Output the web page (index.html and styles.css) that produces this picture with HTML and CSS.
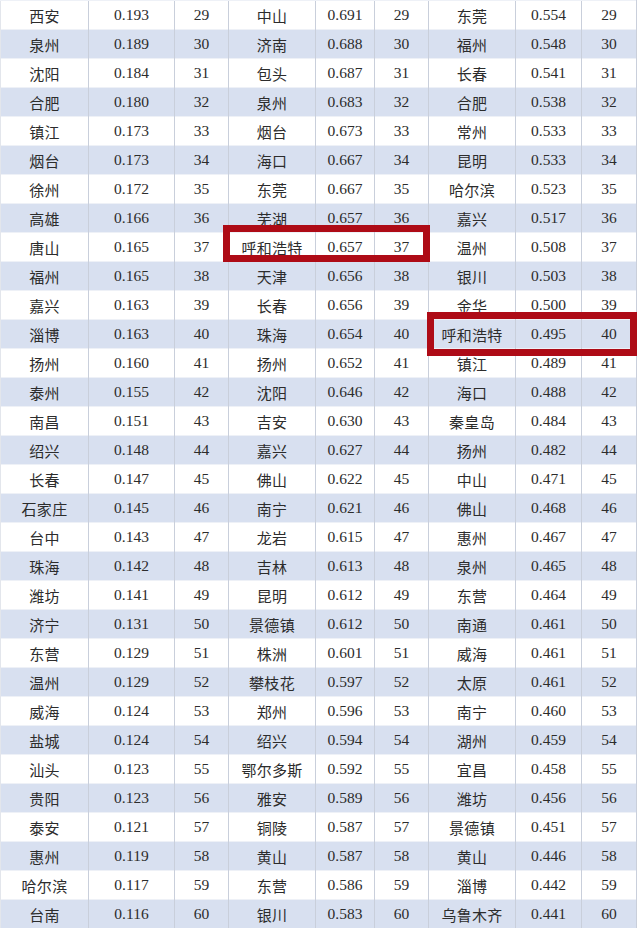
FILE: index.html
```html
<!DOCTYPE html>
<html lang="zh">
<head>
<meta charset="utf-8">
<title>城市排名</title>
<link rel="stylesheet" href="styles.css">
</head>
<body>
<div class="sheet">
<table class="rank">
<colgroup>
<col class="w88"><col class="w86"><col class="w54"><col class="w87"><col class="w59"><col class="w54"><col class="w87"><col class="w66"><col class="w55">
</colgroup>
<tbody>
<tr><td class="c">西安</td><td class="n">0.193</td><td class="n">29</td><td class="c">中山</td><td class="n">0.691</td><td class="n">29</td><td class="c">东莞</td><td class="n">0.554</td><td class="n">29</td></tr>
<tr><td class="c">泉州</td><td class="n">0.189</td><td class="n">30</td><td class="c">济南</td><td class="n">0.688</td><td class="n">30</td><td class="c">福州</td><td class="n">0.548</td><td class="n">30</td></tr>
<tr><td class="c">沈阳</td><td class="n">0.184</td><td class="n">31</td><td class="c">包头</td><td class="n">0.687</td><td class="n">31</td><td class="c">长春</td><td class="n">0.541</td><td class="n">31</td></tr>
<tr><td class="c">合肥</td><td class="n">0.180</td><td class="n">32</td><td class="c">泉州</td><td class="n">0.683</td><td class="n">32</td><td class="c">合肥</td><td class="n">0.538</td><td class="n">32</td></tr>
<tr><td class="c">镇江</td><td class="n">0.173</td><td class="n">33</td><td class="c">烟台</td><td class="n">0.673</td><td class="n">33</td><td class="c">常州</td><td class="n">0.533</td><td class="n">33</td></tr>
<tr><td class="c">烟台</td><td class="n">0.173</td><td class="n">34</td><td class="c">海口</td><td class="n">0.667</td><td class="n">34</td><td class="c">昆明</td><td class="n">0.533</td><td class="n">34</td></tr>
<tr><td class="c">徐州</td><td class="n">0.172</td><td class="n">35</td><td class="c">东莞</td><td class="n">0.667</td><td class="n">35</td><td class="c">哈尔滨</td><td class="n">0.523</td><td class="n">35</td></tr>
<tr><td class="c">高雄</td><td class="n">0.166</td><td class="n">36</td><td class="c">芜湖</td><td class="n">0.657</td><td class="n">36</td><td class="c">嘉兴</td><td class="n">0.517</td><td class="n">36</td></tr>
<tr><td class="c">唐山</td><td class="n">0.165</td><td class="n">37</td><td class="c">呼和浩特</td><td class="n">0.657</td><td class="n">37</td><td class="c">温州</td><td class="n">0.508</td><td class="n">37</td></tr>
<tr><td class="c">福州</td><td class="n">0.165</td><td class="n">38</td><td class="c">天津</td><td class="n">0.656</td><td class="n">38</td><td class="c">银川</td><td class="n">0.503</td><td class="n">38</td></tr>
<tr><td class="c">嘉兴</td><td class="n">0.163</td><td class="n">39</td><td class="c">长春</td><td class="n">0.656</td><td class="n">39</td><td class="c">金华</td><td class="n">0.500</td><td class="n">39</td></tr>
<tr><td class="c">淄博</td><td class="n">0.163</td><td class="n">40</td><td class="c">珠海</td><td class="n">0.654</td><td class="n">40</td><td class="c">呼和浩特</td><td class="n">0.495</td><td class="n">40</td></tr>
<tr><td class="c">扬州</td><td class="n">0.160</td><td class="n">41</td><td class="c">扬州</td><td class="n">0.652</td><td class="n">41</td><td class="c">镇江</td><td class="n">0.489</td><td class="n">41</td></tr>
<tr><td class="c">泰州</td><td class="n">0.155</td><td class="n">42</td><td class="c">沈阳</td><td class="n">0.646</td><td class="n">42</td><td class="c">海口</td><td class="n">0.488</td><td class="n">42</td></tr>
<tr><td class="c">南昌</td><td class="n">0.151</td><td class="n">43</td><td class="c">吉安</td><td class="n">0.630</td><td class="n">43</td><td class="c">秦皇岛</td><td class="n">0.484</td><td class="n">43</td></tr>
<tr><td class="c">绍兴</td><td class="n">0.148</td><td class="n">44</td><td class="c">嘉兴</td><td class="n">0.627</td><td class="n">44</td><td class="c">扬州</td><td class="n">0.482</td><td class="n">44</td></tr>
<tr><td class="c">长春</td><td class="n">0.147</td><td class="n">45</td><td class="c">佛山</td><td class="n">0.622</td><td class="n">45</td><td class="c">中山</td><td class="n">0.471</td><td class="n">45</td></tr>
<tr><td class="c">石家庄</td><td class="n">0.145</td><td class="n">46</td><td class="c">南宁</td><td class="n">0.621</td><td class="n">46</td><td class="c">佛山</td><td class="n">0.468</td><td class="n">46</td></tr>
<tr><td class="c">台中</td><td class="n">0.143</td><td class="n">47</td><td class="c">龙岩</td><td class="n">0.615</td><td class="n">47</td><td class="c">惠州</td><td class="n">0.467</td><td class="n">47</td></tr>
<tr><td class="c">珠海</td><td class="n">0.142</td><td class="n">48</td><td class="c">吉林</td><td class="n">0.613</td><td class="n">48</td><td class="c">泉州</td><td class="n">0.465</td><td class="n">48</td></tr>
<tr><td class="c">潍坊</td><td class="n">0.141</td><td class="n">49</td><td class="c">昆明</td><td class="n">0.612</td><td class="n">49</td><td class="c">东营</td><td class="n">0.464</td><td class="n">49</td></tr>
<tr><td class="c">济宁</td><td class="n">0.131</td><td class="n">50</td><td class="c">景德镇</td><td class="n">0.612</td><td class="n">50</td><td class="c">南通</td><td class="n">0.461</td><td class="n">50</td></tr>
<tr><td class="c">东营</td><td class="n">0.129</td><td class="n">51</td><td class="c">株洲</td><td class="n">0.601</td><td class="n">51</td><td class="c">威海</td><td class="n">0.461</td><td class="n">51</td></tr>
<tr><td class="c">温州</td><td class="n">0.129</td><td class="n">52</td><td class="c">攀枝花</td><td class="n">0.597</td><td class="n">52</td><td class="c">太原</td><td class="n">0.461</td><td class="n">52</td></tr>
<tr><td class="c">威海</td><td class="n">0.124</td><td class="n">53</td><td class="c">郑州</td><td class="n">0.596</td><td class="n">53</td><td class="c">南宁</td><td class="n">0.460</td><td class="n">53</td></tr>
<tr><td class="c">盐城</td><td class="n">0.124</td><td class="n">54</td><td class="c">绍兴</td><td class="n">0.594</td><td class="n">54</td><td class="c">湖州</td><td class="n">0.459</td><td class="n">54</td></tr>
<tr><td class="c">汕头</td><td class="n">0.123</td><td class="n">55</td><td class="c">鄂尔多斯</td><td class="n">0.592</td><td class="n">55</td><td class="c">宜昌</td><td class="n">0.458</td><td class="n">55</td></tr>
<tr><td class="c">贵阳</td><td class="n">0.123</td><td class="n">56</td><td class="c">雅安</td><td class="n">0.589</td><td class="n">56</td><td class="c">潍坊</td><td class="n">0.456</td><td class="n">56</td></tr>
<tr><td class="c">泰安</td><td class="n">0.121</td><td class="n">57</td><td class="c">铜陵</td><td class="n">0.587</td><td class="n">57</td><td class="c">景德镇</td><td class="n">0.451</td><td class="n">57</td></tr>
<tr><td class="c">惠州</td><td class="n">0.119</td><td class="n">58</td><td class="c">黄山</td><td class="n">0.587</td><td class="n">58</td><td class="c">黄山</td><td class="n">0.446</td><td class="n">58</td></tr>
<tr><td class="c">哈尔滨</td><td class="n">0.117</td><td class="n">59</td><td class="c">东营</td><td class="n">0.586</td><td class="n">59</td><td class="c">淄博</td><td class="n">0.442</td><td class="n">59</td></tr>
<tr><td class="c">台南</td><td class="n">0.116</td><td class="n">60</td><td class="c">银川</td><td class="n">0.583</td><td class="n">60</td><td class="c">乌鲁木齐</td><td class="n">0.441</td><td class="n">60</td></tr>
</tbody>
</table>
<div class="mark mark-a"></div>
<div class="mark mark-b"></div>
</div>
</body>
</html>
```
FILE: styles.css
```css
html, body {
  margin: 0;
  padding: 0;
  background: #ffffff;
}

.sheet {
  position: relative;
  width: 640px;
  height: 928px;
  overflow: hidden;
}

.rank {
  border-collapse: collapse;
  table-layout: fixed;
  width: 636px;
  color: #2c2c2c;
}

.w88 { width: 88px; }
.w86 { width: 86px; }
.w54 { width: 54px; }
.w87 { width: 87px; }
.w59 { width: 59px; }
.w66 { width: 66px; }
.w55 { width: 55px; }

.rank tr {
  height: 29px;
}

.rank tr:nth-child(even) {
  background: #d8e0f0;
}

.rank td {
  padding: 0;
  height: 28px;
  text-align: center;
  vertical-align: middle;
  border-left: 1px solid #c9cfdb;
  border-top: 1px solid #eef1f7;
  white-space: nowrap;
  overflow: hidden;
}

.rank td:first-child {
  border-left: 1px solid #e3e6ec;
}

.rank td:last-child {
  border-right: 1px solid #c9cfdb;
}

.rank .c {
  font-family: "Noto Sans CJK SC", "Noto Sans CJK JP", sans-serif;
  font-size: 15px;
  letter-spacing: 0.3px;
}

.rank .n {
  font-family: "Liberation Serif", "Times New Roman", serif;
  font-size: 15.5px;
}

.mark {
  position: absolute;
  border: 7px solid #ae0b16;
  box-sizing: border-box;
}

.mark-a {
  left: 223px;
  top: 225px;
  width: 207px;
  height: 37px;
}

.mark-b {
  left: 427px;
  top: 312px;
  width: 210px;
  height: 44px;
}
```
